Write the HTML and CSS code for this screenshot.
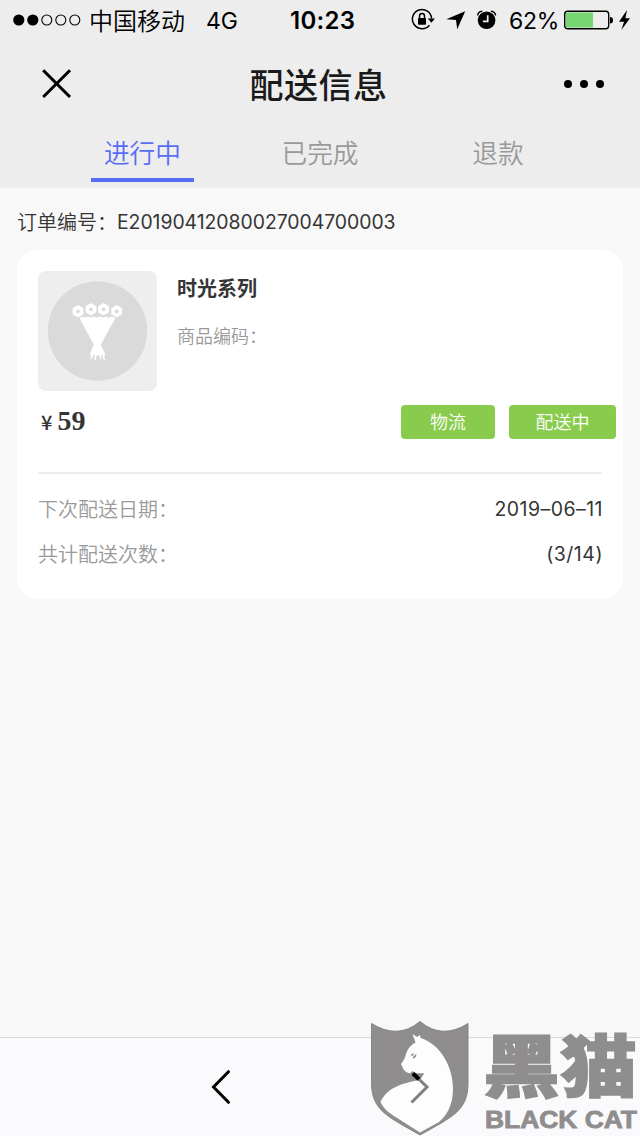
FILE: index.html
```html
<!DOCTYPE html>
<html lang="zh-CN">
<head>
<meta charset="utf-8">
<title>配送信息</title>
<link rel="stylesheet" href="styles.css">
</head>
<body>
<div class="screen">
  <header class="header">
    <div class="status">
      <svg class="signal" width="68" height="12" viewBox="0 0 68 12">
        <circle cx="5.8" cy="6" r="5.6"/><circle cx="19.8" cy="6" r="5.6"/>
        <g class="signal-off"><circle cx="33.8" cy="6" r="5"/><circle cx="47.8" cy="6" r="5"/><circle cx="61.8" cy="6" r="5"/></g>
      </svg>
      <span class="carrier">中国移动</span>
      <span class="network">4G</span>
      <span class="clock">10:23</span>
      <svg class="status-icons" width="90" height="24" viewBox="0 0 90 24">
        <path class="thin" d="M18.4 17.2A9.6 9.6 0 1 1 20.6 10.5"/>
        <path d="M16.8 10.5h7.2l-3.6 4.3z"/>
        <rect x="7" y="10" width="8" height="6.8" rx=".7"/>
        <path class="thin" d="M8.5 10V8a2.5 2.5 0 0 1 5 0v2"/>
        <path d="M35.3 11.2L54.2 3.2 46.2 21.3 45 12z"/>
        <circle cx="75.6" cy="12.2" r="8.8"/>
        <path class="thin" d="M66.700 7.500Q66.900 3.500 71.300 3.200M84.500 7.500Q84.300 3.500 79.900 3.200"/>
        <path class="clock-hand" d="M76.700 7.300v6h-4.800"/>
      </svg>
      <span class="percent">62%</span>
      <svg class="battery" width="68" height="22" viewBox="0 0 68 22">
        <rect class="battery-case" x=".7" y="2.2" width="44" height="17.6" rx="3"/>
        <rect class="battery-level" x="2" y="3.500" width="27" height="15"/>
        <path d="M46 8q3 0 3 3.200t-3 3.200z"/>
        <path d="M63 1L55 12.700h5L57.400 21 66 9.200h-4.600z"/>
      </svg>
    </div>
    <div class="nav">
      <svg class="close" width="30" height="30" viewBox="0 0 30 30"><path d="M1.200 1.200L28 28M28 1.200L1.200 28"/></svg>
      <h1 class="title">配送信息</h1>
      <svg class="more" width="42" height="10" viewBox="0 0 42 10"><circle cx="5" cy="5" r="4"/><circle cx="21" cy="5" r="4"/><circle cx="37" cy="5" r="4"/></svg>
    </div>
    <nav class="tabs">
      <span class="tab active"><span class="tab-label">进行中</span></span>
      <span class="tab"><span class="tab-label">已完成</span></span>
      <span class="tab"><span class="tab-label">退款</span></span>
    </nav>
  </header>

  <main class="content">
    <div class="order"><span>订单编号：</span><span class="order-id">E20190412080027004700003</span></div>
    <section class="card">
      <div class="product">
        <svg class="thumb" width="119" height="120" viewBox="0 0 119 120">
          <rect class="thumb-bg" width="119" height="120" rx="8"/>
          <circle class="thumb-disc" cx="59.500" cy="60" r="49.700"/>
          <g class="bouquet">
            <path d="M40 35l4.600 2.700v5.200L40 45.600l-4.600-2.700v-5.200z"/>
            <path d="M53 33l4.600 2.700v5.200L53 43.600l-4.600-2.700v-5.200z"/>
            <path d="M65.500 33l4.600 2.700v5.200l-4.600 2.700-4.600-2.700v-5.200z"/>
            <path d="M78.700 35l4.600 2.700v5.200l-4.600 2.700-4.600-2.700v-5.200z"/>
            <path class="wrap" d="M42.500 47.500q2-2 4.500 0 3-2 6 0 3-2 6 0 3-2 6 0 3-2 6 0 3-2 5.500 0L62 73.500l4.500 10H52.500l4-10z"/>
            <path class="stems" d="M54.500 83l-1.500 5M58 83l-1 6M62 83l.5 5M65 83l1.500 6"/>
          </g>
          <g class="thumb-disc"><circle cx="40" cy="40.300" r="1.900"/><circle cx="53" cy="38.300" r="1.900"/><circle cx="65.500" cy="38.300" r="1.900"/><circle cx="78.700" cy="40.300" r="1.900"/></g>
        </svg>
        <div class="info">
          <h2 class="name">时光系列</h2>
          <p class="code">商品编码：</p>
        </div>
      </div>
      <div class="actions">
        <div class="price"><span class="yen">¥</span>59</div>
        <span class="button">物流</span>
        <span class="button wide">配送中</span>
      </div>
      <div class="details">
        <div class="row"><span class="label">下次配送日期：</span><span class="date">2019–06–11</span></div>
        <div class="row"><span class="label">共计配送次数：</span><span class="count">(3/14)</span></div>
      </div>
    </section>
  </main>

  <footer class="footer">
    <svg width="20" height="36" viewBox="0 0 20 36"><path class="chevron" d="M17.500 2.700L2.500 18l15 15.300"/></svg>
  </footer>

  <svg class="watermark" width="270" height="116" viewBox="370 1020 270 116">
    <path class="mark" d="M371.500 1023.500Q398 1040 420 1021.500 442 1040 468 1023.500V1083C468 1111 452 1117 420 1135 389 1117 371.500 1111 371.500 1083z"/>
    <path class="cat" d="M412.500 1034L417 1037 420 1035 420.500 1038C440 1044 453 1066 453 1089 453 1106 446 1116 439 1122L420 1132.500 394 1116Q384 1110 380.500 1102C386 1089 401 1083 420 1080L424 1073.500 413 1073.500C407 1074 403 1070 402.500 1067L401 1064C404 1060 405 1058 406 1054 408 1048 411 1045 415.500 1042.500z"/>
    <path class="mark-solid" d="M410 1055l4-2-1 3zM412.500 1057.500l4-4-.5 3-2 2zM413 1073.500h11l-4.500 6z"/>
    <path class="forward" d="M411.500 1072L427 1087l-15.500 15.500"/>
    <path class="forward-dark" d="M413 1073.500L419 1079.300"/>
    <text class="brand" transform="translate(483 1092) scale(1 .9)" textLength="154" lengthAdjust="spacingAndGlyphs">黑猫</text>
    <text class="brand-en" x="485" y="1128" textLength="152" lengthAdjust="spacingAndGlyphs">BLACK CAT</text>
  </svg>
</div>
</body>
</html>
```
FILE: styles.css
```css
* { box-sizing: border-box; }
body { margin: 0; font-family: "Noto Sans CJK SC", sans-serif; color: #353535; }
h1, h2, p { margin: 0; }
svg { display: block; flex: none; }

.screen { position: relative; display: flex; flex-direction: column; width: 640px; height: 1136px; background: #f8f8f8; overflow: hidden; }
.header { height: 188px; background: #ededed; }

.status { display: flex; align-items: center; height: 40px; padding-left: 13px; color: #000; font-size: 24px; line-height: 40px; white-space: nowrap; }
.status span { flex: none; padding-top: 1px; font-family: Inter, sans-serif; }
.signal-off { fill: none; stroke: #000; stroke-width: 1.1; }
.status .carrier { width: 125px; padding: 0 0 0 8px; font-family: "Noto Sans CJK SC", sans-serif; font-weight: 350; }
.status .network { width: 84px; font-size: 23px; }
.status .clock { width: 121px; font-weight: 600; letter-spacing: .3px; }
.status-icons { margin-right: 8px; }
.thin { fill: none; stroke: #000; stroke-width: 1.5; }
.clock-hand { fill: none; stroke: #ededed; stroke-width: 1.7; }
.status .percent { width: 55px; font-size: 23px; letter-spacing: -.3px; }
.battery-case { fill: none; stroke: #000; stroke-width: 1.4; }
.battery-level { fill: #76d672; }

.nav { display: flex; align-items: center; justify-content: space-between; height: 88px; padding: 0 35px 0 42px; }
.close { fill: none; stroke: #000; stroke-width: 3; }
.title { padding-left: 2px; color: #1a1a1a; font-size: 34px; font-weight: 500; line-height: 50px; letter-spacing: .5px; }

.tabs { display: flex; height: 60px; padding: 0 53px; }
.tab { display: flex; flex: 1; justify-content: center; color: #999; font-size: 25.7px; font-weight: 350; line-height: 48px; }
.tab-label { height: 54px; padding: 0 12.9px; }
.active .tab-label { width: 103px; margin-left: 1px; border-bottom: 4px solid #586cf5; }
.active { color: #586cf5; }

.content { flex: 1; padding: 0 17px; }
.order { display: flex; height: 62px; padding-top: 5px; font-size: 20px; font-weight: 350; line-height: 58px; }
.order-id { font-family: Inter, sans-serif; font-size: 19.4px; font-weight: 400; letter-spacing: -.04px; }
.card { height: 349px; padding: 21px 21px 0; border-radius: 20px; background: #fff; }
.product { display: flex; gap: 20px; }
.thumb-bg { fill: #eee; }
.thumb-disc { fill: #dadada; }
.bouquet { fill: #fff; stroke: #fff; stroke-width: 1.5; stroke-linejoin: round; }
.stems { fill: none; }
.info { padding-top: 2px; }
.name { font-size: 20px; font-weight: 700; line-height: 30px; }
.code { padding-top: 17px; color: #999; font-size: 18px; font-weight: 350; line-height: 30px; }
.actions { display: flex; width: 578px; height: 81px; padding-top: 14px; }
.price { flex: 1; padding-left: 3px; font: bold 28px/32px "Liberation Serif", serif; }
.yen { margin-right: 5px; font: 500 20px/32px "Noto Sans CJK SC", sans-serif; }
.button { width: 94px; height: 34px; border-radius: 4px; background: #89cc4d; color: #fff; font-size: 18px; font-weight: 350; line-height: 33px; text-align: center; }
.wide { width: 107px; margin-left: 14px; }
.details { padding-top: 12px; border-top: 2px solid #ededed; }
.row { display: flex; justify-content: space-between; height: 45px; font-size: 20px; font-weight: 350; line-height: 45px; }
.label { color: #999; }
.date, .count { padding-top: 1px; font-family: Inter, sans-serif; font-size: 19.5px; font-weight: 400; }
.date { margin-right: -1px; letter-spacing: .45px; }
.count { margin-right: -1px; letter-spacing: .5px; }

.footer { height: 99px; padding: 31px 0 0 211px; border-top: 1px solid #d9dade; background: #fafafc; }
.chevron { fill: none; stroke: #000; stroke-width: 3; stroke-linecap: round; }

.watermark { position: absolute; top: 1020px; left: 370px; }
.mark { fill: #8f8d8e; stroke: #858585; stroke-width: 1; }
.mark-solid { fill: #8f8d8e; }
.cat { fill: #fdfdfe; }
.forward { fill: none; stroke: #808080; stroke-width: 3; }
.forward-dark { fill: none; stroke: #000; stroke-width: 4; }
.brand { fill: #8f8d8e; stroke: #8f8d8e; stroke-width: 1.5; font-family: "Noto Sans CJK SC", sans-serif; font-size: 76px; font-weight: 900; }
.brand-en { fill: #8f8d8e; stroke: #8f8d8e; stroke-width: .8; font-family: "Liberation Sans", sans-serif; font-size: 23px; font-weight: 700; }
```
